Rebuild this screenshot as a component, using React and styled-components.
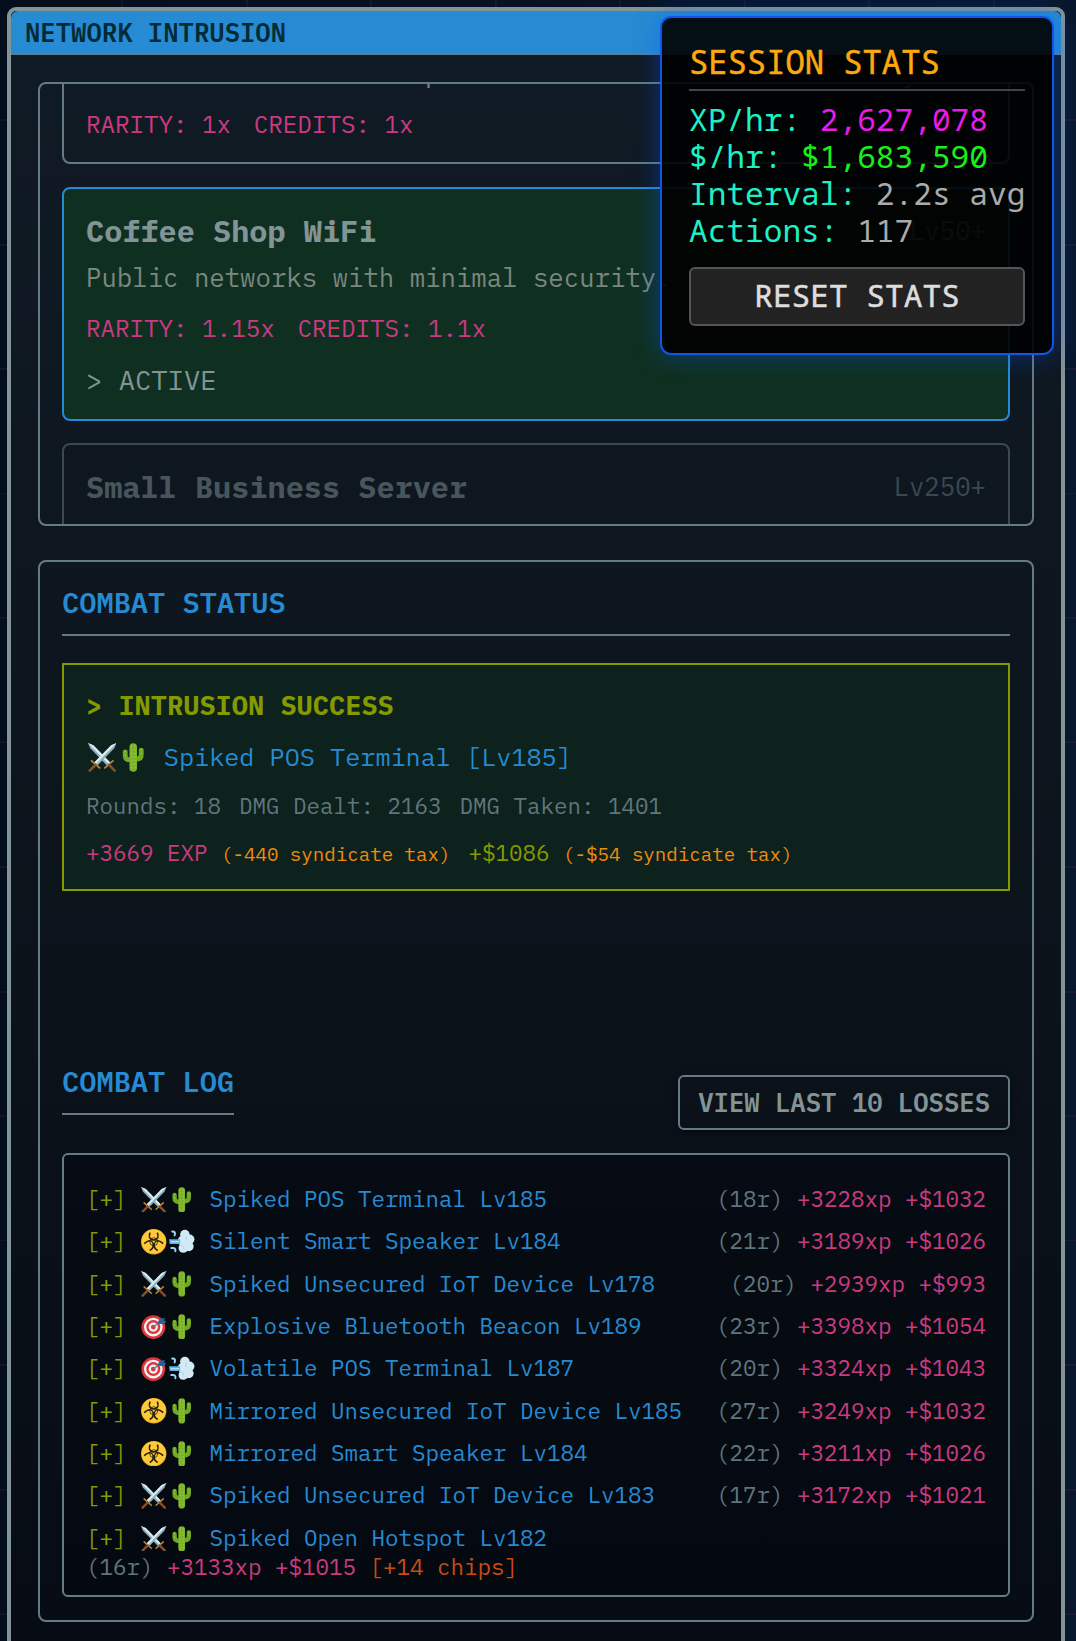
import React from 'react';
import styled, { createGlobalStyle, css } from 'styled-components';

const colors = {
    ink: '#002b36',
    frame: '#839496',
    line: '#657b83',
    dim: '#60757d',
    text: '#839496',
    blue: '#268bd2',
    pink: '#c93a80',
    green: '#859900',
    orange: '#cb4b16',
    tax: '#ee8c10',
};

const GlobalStyle = createGlobalStyle`
    * {
        box-sizing: border-box;
    }

    body {
        margin: 0;
        background: #04101f;
        font-family: 'IBM Plex Mono', 'Liberation Mono', monospace;
        color: ${colors.text};
    }
`;

const Page = styled.div`
    position: relative;
    height: 1641px;
    overflow: hidden;
    padding: 7px 11px 0 7px;
    background:
        repeating-linear-gradient(90deg, transparent 0 121px, rgba(211, 54, 130, 0.1) 121px 123px, transparent 123px 124.5px),
        repeating-linear-gradient(180deg, transparent 0 119px, rgba(211, 54, 130, 0.1) 119px 121px, transparent 121px 124.5px),
        linear-gradient(90deg, #030e1c, #08172c);
`;

const Window = styled.div`
    height: 1700px;
    border: 4px solid ${colors.frame};
    border-radius: 9px;
    background: linear-gradient(180deg, #111b25 0, #0e1720 500px, #0b121a 1000px, #070c14 1640px);
`;

const TitleBar = styled.div`
    height: 44px;
    padding: 7px 14px 0;
    border-bottom: 2px solid #587f98;
    border-radius: 7px 7px 0 0;
    background: ${colors.blue};
    color: ${colors.ink};
    font-size: 25.6px;
    font-weight: 600;
    line-height: 30px;
`;

const WindowBody = styled.div`
    display: flex;
    flex-direction: column;
    gap: 34px;
    padding: 27px;
`;

const Panel = styled.section`
    border: 2px solid ${colors.line};
    border-radius: 8px;
    padding: 22px 22px 23px;
`;

const ZoneList = styled(Panel)`
    display: flex;
    flex-direction: column;
    gap: 22.5px;
    height: 444px;
    padding: 0 22px;
    overflow: hidden;
`;

const ZoneCard = styled.article`
    flex: none;
    border: 2px solid ${colors.line};
    border-radius: 8px;
    padding: 19px 22px 16px;

    /* the list is scrolled past the top of its first card */
    &:first-child {
        margin-top: -55px;
    }

    ${({ $active }) => $active && css`
        border-color: ${colors.blue};
        background: #0f3020;
    `}

    ${({ $locked }) => $locked && css`
        min-height: 181px;
        opacity: 0.5;
    `}
`;

const ZoneHeader = styled.div`
    display: flex;
    justify-content: space-between;
    line-height: 46px;
`;

const ZoneName = styled.span`
    font-size: 30.25px;
    font-weight: bold;
`;

const ZoneLevel = styled.span`
    font-size: 25.7px;
    color: ${colors.line};
`;

const ZoneInfo = styled.div`
    margin-top: 1px;
    font-size: 25.7px;
    line-height: 46px;
    white-space: nowrap;
    color: #7c8780;
`;

const ZoneRates = styled.div`
    display: flex;
    gap: 22.7px;
    margin-top: 6px;
    font-size: 24.2px;
    line-height: 43px;
    color: ${colors.pink};
`;

const ZoneState = styled.div`
    margin: 8px 0 1px;
    font-size: 27.2px;
    line-height: 44px;
`;

const Heading = styled.h2`
    margin: 0 0 27px;
    padding-bottom: 13px;
    border-bottom: 2px solid ${colors.line};
    color: ${colors.blue};
    font-size: 28.7px;
    font-weight: 600;
    line-height: 37px;
`;

const StatusArea = styled.div`
    min-height: 373px;
    margin-bottom: 27px;
`;

const ResultBox = styled.div`
    height: 228px;
    padding: 19px 22px;
    border: 2px solid ${colors.green};
    background: #0d211d;
`;

const ResultTitle = styled.div`
    color: ${colors.green};
    font-size: 27px;
    font-weight: bold;
    line-height: 42px;
`;

const ResultTarget = styled.div`
    margin-top: 11px;
    color: ${colors.blue};
    font-size: 25.2px;
    line-height: 40px;
`;

const ResultRow = styled.div`
    display: flex;
    gap: 18px;
    margin-top: ${({ $top }) => $top}px;
    color: ${colors.dim};
    font-size: 22.5px;
    line-height: 34px;
`;

const Tint = styled.span`
    color: ${({ $color }) => colors[$color]};
`;

const Tax = styled.span`
    color: ${colors.tax};
    font-size: 19.14px;
`;

const LogHeader = styled.div`
    display: flex;
    align-items: center;
    justify-content: space-between;
    margin-bottom: 11px;
`;

const LossesButton = styled.button`
    height: 55px;
    padding: 0 18px;
    border: 2px solid ${colors.line};
    border-radius: 6px;
    background: transparent;
    box-shadow: 0 3px 8px rgba(0, 0, 0, 0.35);
    color: ${colors.text};
    font-family: inherit;
    font-size: 25.6px;
    font-weight: 600;
`;

const LogBox = styled.div`
    height: 444px;
    padding: 22.5px 22px 0;
    border: 2px solid ${colors.line};
    border-radius: 6px;
    background: rgba(0, 4, 8, 0.32);
    font-size: 22.5px;
    line-height: 29.3px;
`;

const LogRow = styled.div`
    display: flex;
    flex-wrap: wrap;
    justify-content: space-between;
    column-gap: 13.5px;
    padding: 6.5px 0 6.55px;
    color: ${colors.pink};
    white-space: pre;
`;

const Glyph = styled.svg`
    display: inline-block;
    width: 1.13em;
    height: 1.13em;
    margin: 0 0.055em 0 0.06em;
    vertical-align: -0.23em;
`;

const StatsPanel = styled.aside`
    position: absolute;
    top: 16px;
    left: 660px;
    width: 394px;
    height: 339px;
    padding: 27px;
    border: 2px solid #1155ea;
    border-radius: 11px;
    background: rgba(0, 0, 0, 0.9);
    box-shadow: 0 0 27px rgba(0, 85, 255, 0.42);
    font-family: 'Noto Sans Mono', 'DejaVu Sans Mono', monospace;
    font-size: 31.15px;
    line-height: 37px;
    white-space: nowrap;
`;

const StatsTitle = styled.div`
    margin-bottom: 10px;
    padding-bottom: 10px;
    border-bottom: 2px solid #444;
    color: #fca810;
    font-size: 32.15px;
    line-height: 34px;
    -webkit-text-stroke: 0.5px #fca810;
`;

const StatRow = styled.div`
    color: #1ef0c4;

    span {
        color: ${({ $value }) => $value};
    }
`;

const ResetButton = styled.button`
    width: 100%;
    height: 59px;
    margin-top: 18px;
    padding: 0 0 2px;
    border: 2px solid #555;
    border-radius: 6px;
    background: #222;
    color: #ddd;
    font: inherit;
    -webkit-text-stroke: 0.5px #ddd;
`;

const glyphs = {
    swords: (
        <>
            <path d="M0 0 L6 2.500 L25 22 L21 25 L2.500 6 Z" fill="#8fb0bb" />
            <path d="M0 0 L6 2.500 L25 22 L23 23.500 Z" fill="#d8edf3" />
            <path d="M32 0 L26 2.500 L7 22 L11 25 L29.500 6 Z" fill="#8fb0bb" />
            <path d="M32 0 L26 2.500 L7 22 L9 23.500 Z" fill="#d8edf3" />
            <path d="M28 20 L19 28 M4 20 L13 28" stroke="#b98534" strokeWidth="2" strokeLinecap="round" />
            <path d="M24 25 L30 31 M8 25 L2 31" stroke="#87502c" strokeWidth="3" strokeLinecap="round" />
        </>
    ),
    cactus: (
        <>
            <path
                d="M7 10 V14 Q7 19 13 19 H16 M25 8 V13 Q25 18 20 18 H16"
                fill="none"
                stroke="#6fa824"
                strokeWidth="5.500"
                strokeLinecap="round"
            />
            <path d="M16 4.500 V28" stroke="#7ab42a" strokeWidth="8.500" strokeLinecap="round" />
            <path
                d="M14 3 V30 M18 3 V30 M7 9 V15 M25 7 V14"
                stroke="#b5d65a"
                strokeWidth="0.900"
                strokeDasharray="1.500 2.500"
            />
        </>
    ),
    hazard: (
        <>
            <circle cx="16" cy="16" r="16" fill="#f0b02a" />
            <circle cx="16" cy="15.500" r="15" fill="#ffca3a" />
            <g fill="none" stroke="#241d12" strokeWidth="2">
                <path d="M11.500 4.500 Q8 12.500 16 14 Q24 12.500 20.500 4.500" />
                <path d="M4 18.500 Q11.500 12 15 17 Q17 24 11 27" />
                <path d="M28 18.500 Q20.500 12 17 17 Q15 24 21 27" />
            </g>
            <circle cx="16" cy="16" r="5" fill="none" stroke="#241d12" strokeWidth="1" />
            <circle cx="16" cy="16" r="1.300" fill="#ffca3a" />
        </>
    ),
    dash: (
        <>
            <g fill="#d2eaf6">
                <circle cx="20" cy="7" r="6" />
                <circle cx="26" cy="13" r="6" />
                <circle cx="25" cy="22" r="6" />
                <circle cx="18" cy="24" r="6" />
                <circle cx="18" cy="15" r="7" />
            </g>
            <path d="M15 19 Q19 22 19 26 M22 9 Q20 12 23 14" fill="none" stroke="#b4d6ea" strokeWidth="1.300" />
            <path d="M0 13 H14 V19 H1 Z" fill="#5fb1df" />
            <path d="M2 16 H13" stroke="#c0e5f7" strokeWidth="1.500" />
            <path d="M4 3 Q9 3 7 8 M3 24 Q9 23 8 28" fill="none" stroke="#9fd2ed" strokeWidth="2.500" strokeLinecap="round" />
        </>
    ),
    target: (
        <>
            <circle cx="15.500" cy="16.500" r="15" fill="#db363d" />
            <circle cx="15.500" cy="16.500" r="11.700" fill="#f4eff0" />
            <circle cx="15.500" cy="16.500" r="8.800" fill="#db363d" />
            <circle cx="15.500" cy="16.500" r="5.800" fill="#f4eff0" />
            <circle cx="15.500" cy="16.500" r="3" fill="#db363d" />
            <path d="M16 16 L25 9" stroke="#6d8796" strokeWidth="1.700" />
            <path d="M20 12 L24 6 L30 5 L29 8 L32 10 L27 13 Z" fill="#24649e" />
        </>
    ),
};

const Icon = ({ name }) => (
    <Glyph viewBox="0 0 32 32" aria-hidden="true">
        {glyphs[name]}
    </Glyph>
);

const zones = [
    {
        info: 'Isolated testbeds and practice boxes with low security',
        rarity: '1x',
        credits: '1x',
    },
    {
        name: 'Coffee Shop WiFi',
        level: 'Lv50+',
        info: 'Public networks with minimal security.',
        rarity: '1.15x',
        credits: '1.1x',
        active: true,
    },
    { name: 'Small Business Server', level: 'Lv250+', locked: true },
];

const log = [
    { icons: ['swords', 'cactus'], name: 'Spiked POS Terminal Lv185', rounds: 18, gain: '+3228xp +$1032' },
    { icons: ['hazard', 'dash'], name: 'Silent Smart Speaker Lv184', rounds: 21, gain: '+3189xp +$1026' },
    { icons: ['swords', 'cactus'], name: 'Spiked Unsecured IoT Device Lv178', rounds: 20, gain: '+2939xp +$993' },
    { icons: ['target', 'cactus'], name: 'Explosive Bluetooth Beacon Lv189', rounds: 23, gain: '+3398xp +$1054' },
    { icons: ['target', 'dash'], name: 'Volatile POS Terminal Lv187', rounds: 20, gain: '+3324xp +$1043' },
    { icons: ['hazard', 'cactus'], name: 'Mirrored Unsecured IoT Device Lv185', rounds: 27, gain: '+3249xp +$1032' },
    { icons: ['hazard', 'cactus'], name: 'Mirrored Smart Speaker Lv184', rounds: 22, gain: '+3211xp +$1026' },
    { icons: ['swords', 'cactus'], name: 'Spiked Unsecured IoT Device Lv183', rounds: 17, gain: '+3172xp +$1021' },
    { icons: ['swords', 'cactus'], name: 'Spiked Open Hotspot Lv182', rounds: 16, gain: '+3133xp +$1015', extra: '[+14 chips]' },
];

const Zone = ({ zone }) => (
    <ZoneCard $active={zone.active} $locked={zone.locked}>
        {zone.name && (
            <ZoneHeader>
                <ZoneName>{zone.name}</ZoneName>
                <ZoneLevel>{zone.level}</ZoneLevel>
            </ZoneHeader>
        )}
        {zone.info && <ZoneInfo>{zone.info}</ZoneInfo>}
        {zone.rarity && (
            <ZoneRates>
                <span>RARITY: {zone.rarity}</span>
                <span>CREDITS: {zone.credits}</span>
            </ZoneRates>
        )}
        {zone.active && <ZoneState>&gt; ACTIVE</ZoneState>}
    </ZoneCard>
);

const LogEntry = ({ entry }) => (
    <LogRow>
        <span>
            <Tint $color="green">[+]</Tint>{' '}
            {entry.icons.map(name => <Icon key={name} name={name} />)}{' '}
            <Tint $color="blue">{entry.name}</Tint>
        </span>
        <span>
            <Tint $color="dim">({entry.rounds}r)</Tint> {entry.gain}
            {entry.extra && <Tint $color="orange"> {entry.extra}</Tint>}
        </span>
    </LogRow>
);

const SessionStats = () => (
    <StatsPanel>
        <StatsTitle>SESSION STATS</StatsTitle>
        <StatRow $value="#e81be8">XP/hr: <span>2,627,078</span></StatRow>
        <StatRow $value="#19f019">$/hr: <span>$1,683,590</span></StatRow>
        <StatRow $value="#aaa">Interval: <span>2.2s avg</span></StatRow>
        <StatRow $value="#aaa">Actions: <span>117</span></StatRow>
        <ResetButton>RESET STATS</ResetButton>
    </StatsPanel>
);

const App = () => (
    <Page>
        <GlobalStyle />
        <Window>
            <TitleBar>NETWORK INTRUSION</TitleBar>
            <WindowBody>
                <ZoneList>
                    {zones.map(zone => <Zone key={zone.info || zone.name} zone={zone} />)}
                </ZoneList>
                <Panel>
                    <Heading>COMBAT STATUS</Heading>
                    <StatusArea>
                        <ResultBox>
                            <ResultTitle>&gt; INTRUSION SUCCESS</ResultTitle>
                            <ResultTarget>
                                <Icon name="swords" />
                                <Icon name="cactus" /> Spiked POS Terminal [Lv185]
                            </ResultTarget>
                            <ResultRow $top={12}>
                                <span>Rounds: 18</span>
                                <span>DMG Dealt: 2163</span>
                                <span>DMG Taken: 1401</span>
                            </ResultRow>
                            <ResultRow $top={13}>
                                <Tint $color="pink">+3669 EXP <Tax>(-440 syndicate tax)</Tax></Tint>
                                <Tint $color="green">+$1086 <Tax>(-$54 syndicate tax)</Tax></Tint>
                            </ResultRow>
                        </ResultBox>
                    </StatusArea>
                    <LogHeader>
                        <Heading>COMBAT LOG</Heading>
                        <LossesButton>VIEW LAST 10 LOSSES</LossesButton>
                    </LogHeader>
                    <LogBox>
                        {log.map(entry => <LogEntry key={entry.name} entry={entry} />)}
                    </LogBox>
                </Panel>
            </WindowBody>
        </Window>
        <SessionStats />
    </Page>
);

export default App;
